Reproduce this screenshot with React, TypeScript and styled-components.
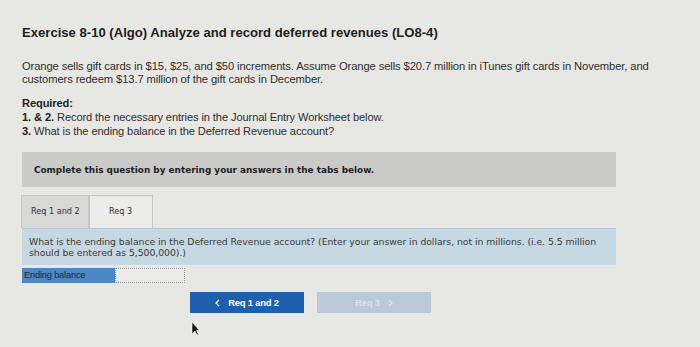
import React from "react";
import styled, { createGlobalStyle } from "styled-components";

const Global = createGlobalStyle`
  html, body { margin: 0; padding: 0; background: #e7e7e4; }
  body { width: 700px; height: 347px; overflow: hidden; }
`;

const Page = styled.div`
  position: relative;
  width: 700px;
  height: 347px;
  padding: 25px 40px 0 22px;
  box-sizing: border-box;
  font-family: "Liberation Sans", Arial, sans-serif;
  color: #2b2b2b;
`;

const Title = styled.h1`
  margin: 0;
  font-size: 13.1px;
  line-height: 16px;
  font-weight: bold;
  color: #1e1e1e;
`;

const Para = styled.p<{ $lh: number; $mt: number; $fs: number }>`
  margin: ${(p) => p.$mt}px 0 0;
  font-size: ${(p) => p.$fs}px;
  line-height: ${(p) => p.$lh}px;
  color: #2e2e2e;
  letter-spacing: -0.1px;
`;

const B = styled.b`
  font-weight: bold;
  color: #222;
`;

const Panel = styled.div`
  width: 594px;
`;

const Instruction = styled.div`
  margin-top: 14px;
  height: 34px;
  background: #cacbc9;
  display: flex;
  align-items: center;
  padding: 1px 12px 0;
  font-family: "DejaVu Sans", Verdana, sans-serif;
  font-size: 8.9px;
  font-weight: bold;
  color: #222;
`;

const Tabs = styled.div`
  margin-top: 8px;
  display: flex;
  height: 33px;
`;

const Tab = styled.div<{ $active?: boolean; $w: number }>`
  width: ${(p) => p.$w}px;
  box-sizing: border-box;
  height: 100%;
  display: flex;
  align-items: center;
  padding-left: ${(p) => (p.$active ? 19 : 9)}px;
  padding-bottom: 2px;
  font-family: "DejaVu Sans", Verdana, sans-serif;
  font-size: 8.1px;
  color: #333;
  background: ${(p) => (p.$active ? "#ecedeb" : "#d8d8d6")};
  border: 1px solid ${(p) => (p.$active ? "#c4c5c3" : "#c6c6c4")};
  border-bottom: none;
  margin-left: ${(p) => (p.$active ? 0 : -1)}px;
`;

const InfoBox = styled.div`
  height: 37px;
  box-sizing: border-box;
  background: #c6d8e2;
  border-top: 1px solid #b7c9d4;
  padding: 7px 8px 0 7px;
  font-family: "DejaVu Sans", Verdana, sans-serif;
  font-size: 9.3px;
  line-height: 11px;
  letter-spacing: -0.05px;
  color: #3a3a3a;
  white-space: nowrap;
`;

const Row = styled.div`
  margin-top: 3px;
  display: flex;
  height: 15px;
`;

const Label = styled.div`
  width: 93px;
  background: #4d86c4;
  font-size: 9.3px;
  line-height: 15px;
  padding-left: 2px;
  box-sizing: border-box;
  color: #1d2a3a;
  letter-spacing: -0.2px;
`;

const Input = styled.div`
  width: 70px;
  box-sizing: border-box;
  background: #ebebea;
  border: 1px dotted #9a9a9a;
`;

const Nav = styled.div`
  margin: 9px 0 0 168px;
  display: flex;
  gap: 13px;
`;

const NavButton = styled.div<{ $disabled?: boolean }>`
  width: 114px;
  height: 21px;
  display: flex;
  align-items: center;
  justify-content: center;
  gap: 8px;
  font-size: 9.4px;
  font-weight: bold;
  background: ${(p) => (p.$disabled ? "#b9c9d7" : "#1e5faf")};
  color: ${(p) => (p.$disabled ? "#dbe4ec" : "#ffffff")};
  letter-spacing: -0.2px;
`;

const Cursor = styled.svg`
  position: absolute;
  left: 191px;
  top: 321px;
`;

const Chevron = ({ dir }: { dir: "left" | "right" }) => (
  <svg width="5" height="8" viewBox="0 0 5 8">
    <path
      d={dir === "left" ? "M4 1 L1 4 L4 7" : "M1 1 L4 4 L1 7"}
      fill="none"
      stroke="currentColor"
      strokeWidth="1.3"
    />
  </svg>
);

export default function App() {
  return (
    <>
      <Global />
      <Page>
        <Title>Exercise 8-10 (Algo) Analyze and record deferred revenues (LO8-4)</Title>
        <Para $lh={13} $mt={19} $fs={11.2}>
          Orange sells gift cards in $15, $25, and $50 increments. Assume Orange sells $20.7 million in iTunes gift cards in November, and
          <br />
          customers redeem $13.7 million of the gift cards in December.
        </Para>
        <Para $lh={14} $mt={10} $fs={11.1}>
          <B>Required:</B>
          <br />
          <B>1. &amp; 2.</B> Record the necessary entries in the Journal Entry Worksheet below.
          <br />
          <B>3.</B> What is the ending balance in the Deferred Revenue account?
        </Para>
        <Panel>
          <Instruction>Complete this question by entering your answers in the tabs below.</Instruction>
          <Tabs>
            <Tab $w={68}>Req 1 and 2</Tab>
            <Tab $w={64} $active>Req 3</Tab>
          </Tabs>
          <InfoBox>
            What is the ending balance in the Deferred Revenue account? (Enter your answer in dollars, not in millions. (i.e. 5.5 million
            <br />
            should be entered as 5,500,000).)
          </InfoBox>
          <Row>
            <Label>Ending balance</Label>
            <Input />
          </Row>
          <Nav>
            <NavButton>
              <Chevron dir="left" />
              Req 1 and 2
            </NavButton>
            <NavButton $disabled>
              Req 3
              <Chevron dir="right" />
            </NavButton>
          </Nav>
        </Panel>
        <Cursor width="9" height="15" viewBox="0 0 9 15">
          <path d="M1 1 L1 13 L4 10 L6 14 L7.5 13.3 L5.5 9.5 L8.5 9.5 Z" fill="#111" stroke="#fff" strokeWidth="0.6" />
        </Cursor>
      </Page>
    </>
  );
}
